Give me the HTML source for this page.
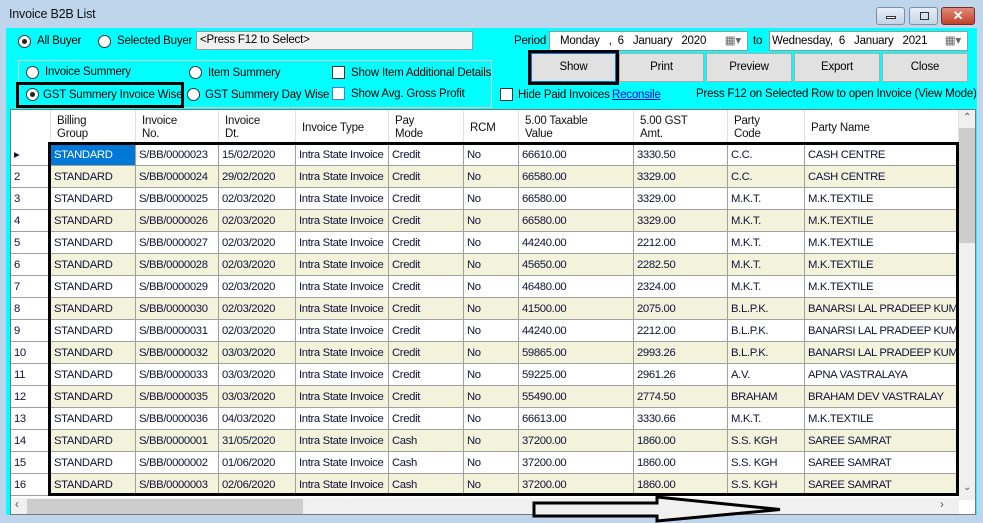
<!DOCTYPE html>
<html><head><meta charset="utf-8"><style>
*{box-sizing:border-box;margin:0;padding:0}
body{width:983px;height:523px;overflow:hidden;background:#bfd5ec;font-family:"Liberation Sans",sans-serif;font-size:11.5px;letter-spacing:-0.2px;color:#000;position:relative}
.a{position:absolute;white-space:nowrap}
.cyan{position:absolute;left:6px;top:28px;width:971px;height:487px;background:#00ffff}
.rad{position:absolute;width:13px;height:13px;border:1px solid #333;border-radius:50%;background:#fff}
.rad.on::after{content:"";position:absolute;left:3px;top:3px;width:5px;height:5px;border-radius:50%;background:#222}
.chk{position:absolute;width:13px;height:13px;border:1px solid #333;background:#fff}
.btn{position:absolute;top:53px;height:29px;background:#e1e1e1;border:1px solid #adadad;text-align:center;line-height:27px}
.grid{position:absolute;left:10px;top:109px;width:966px;height:406px;background:#fff;border:1px solid #777;overflow:hidden}
.h{position:absolute;top:0;height:34px;border-right:1px solid #e0e0e0;padding:5px 0 0 6px;line-height:13px;color:#111}
.r{position:absolute;left:0;height:22px;border-bottom:1px solid #a0a0a0}
.c{position:absolute;top:0;height:21px;border-right:1px solid #a0a0a0;padding-left:3px;line-height:23px;color:#10103a;overflow:hidden;white-space:nowrap;font-size:11.3px;letter-spacing:-0.35px}
</style></head><body>
<div class="a" style="left:9px;top:7px;font-size:12.5px;color:#111">Invoice B2B List</div>
<div class="a" style="left:876px;top:7px;width:29px;height:18px;border:1px solid #7b8ea6;border-radius:3px;background:linear-gradient(#e6eef8,#c5d4e6)"><div style="position:absolute;left:9px;top:8px;width:10px;height:3px;border:1px solid #333;background:#fff"></div></div>
<div class="a" style="left:909px;top:7px;width:29px;height:18px;border:1px solid #7b8ea6;border-radius:3px;background:linear-gradient(#e6eef8,#c5d4e6)"><div style="position:absolute;left:10px;top:4px;width:9px;height:8px;border:1px solid #333"></div></div>
<div class="a" style="left:941px;top:7px;width:34px;height:18px;border:1px solid #7a2a20;border-radius:3px;background:linear-gradient(#e08a78,#c2402a);color:#fff;font-weight:bold;text-align:center;line-height:16px;font-size:13px">✕</div>
<div class="cyan"></div>
<div class="rad on" style="left:18px;top:35px"></div><div class="a" style="left:37px;top:35px">All Buyer</div>
<div class="rad" style="left:98px;top:35px"></div><div class="a" style="left:117px;top:35px">Selected Buyer</div>
<div class="a" style="left:196px;top:31px;width:277px;height:19px;background:#f0f0f0;border:1px solid #999;padding-left:3px;line-height:17px">&lt;Press F12 to Select&gt;</div>
<div class="a" style="left:18px;top:60px;width:474px;height:48px;border:1px solid #ccc"></div>
<div class="rad" style="left:26px;top:66px"></div><div class="a" style="left:45px;top:66px">Invoice Summery</div>
<div class="rad" style="left:189px;top:66px"></div><div class="a" style="left:208px;top:67px">Item Summery</div>
<div class="chk" style="left:332px;top:66px"></div><div class="a" style="left:351px;top:67px">Show Item Additional Details</div>
<div class="a" style="left:16px;top:82px;width:168px;height:26px;border:3px solid #000"></div>
<div class="rad on" style="left:26px;top:88px"></div><div class="a" style="left:43px;top:89px">GST Summery Invoice Wise</div>
<div class="rad" style="left:187px;top:88px"></div><div class="a" style="left:205px;top:89px">GST Summery Day Wise</div>
<div class="chk" style="left:332px;top:87px;border-color:#4a7cd0"></div><div class="a" style="left:351px;top:88px">Show Avg. Gross Profit</div>
<div class="a" style="left:514px;top:35px">Period</div>
<div class="a" style="left:549px;top:31px;width:199px;height:20px;background:#fff;border:1px solid #999;padding-left:10px;line-height:19px">Monday &nbsp;&nbsp;, &nbsp;6 &nbsp;&nbsp;January &nbsp;&nbsp;2020<span style="position:absolute;right:6px;color:#666">▦▾</span></div>
<div class="a" style="left:753px;top:35px">to</div>
<div class="a" style="left:769px;top:31px;width:199px;height:20px;background:#fff;border:1px solid #999;padding-left:2px;line-height:19px">Wednesday, &nbsp;6 &nbsp;&nbsp;January &nbsp;&nbsp;2021<span style="position:absolute;right:6px;color:#666">▦▾</span></div>
<div class="btn" style="left:531px;width:85px;border:1px solid #0078d7">Show</div>
<div class="a" style="left:528px;top:50px;width:91px;height:35px;border:3px solid #000"></div>
<div class="btn" style="left:619px;width:85px">Print</div>
<div class="btn" style="left:706px;width:86px">Preview</div>
<div class="btn" style="left:794px;width:86px">Export</div>
<div class="btn" style="left:882px;width:86px">Close</div>
<div class="chk" style="left:500px;top:88px"></div><div class="a" style="left:518px;top:89px">Hide Paid Invoices</div>
<div class="a" style="left:612px;top:89px;color:#00e;text-decoration:underline">Reconsile</div>
<div class="a" style="left:696px;top:88px">Press F12 on Selected Row to open Invoice (View Mode)</div>
<div class="grid" id="g">
<div class="h" style="left:0;width:40px"></div>
<div class="h" style="left:40px;width:85px">Billing<br>Group</div>
<div class="h" style="left:125px;width:83px">Invoice<br>No.</div>
<div class="h" style="left:208px;width:77px">Invoice<br>Dt.</div>
<div class="h" style="left:285px;width:93px;padding-top:12px">Invoice Type</div>
<div class="h" style="left:378px;width:75px">Pay<br>Mode</div>
<div class="h" style="left:453px;width:55px;padding-top:12px">RCM</div>
<div class="h" style="left:508px;width:115px">5.00 Taxable<br>Value</div>
<div class="h" style="left:623px;width:94px">5.00 GST<br>Amt.</div>
<div class="h" style="left:717px;width:77px">Party<br>Code</div>
<div class="h" style="left:794px;width:154px;padding-top:12px">Party Name</div>
<div class="a" style="left:948px;top:0;width:17px;height:390px;background:#f0f0f0"><div style="position:absolute;left:0;top:18px;width:17px;height:115px;background:#cdcdcd"></div><div style="position:absolute;left:4px;top:2px;color:#555;font-size:10px">⌃</div><div style="position:absolute;left:4px;top:372px;color:#555;font-size:10px">⌄</div></div>
<div class="a" style="left:0;top:388px;width:948px;height:18px;background:#f0f0f0"><div style="position:absolute;left:16px;top:1px;width:276px;height:15px;background:#cdcdcd"></div><div style="position:absolute;left:4px;top:1px;color:#555">‹</div><div style="position:absolute;left:929px;top:1px;color:#555">›</div></div>
</div>
<div class="a" style="left:48px;top:142px;width:911px;height:354px;border:3px solid #000"></div>
<svg class="a" style="left:0;top:0" width="983" height="523"><polygon points="534,503 657,503 657,497 780,509.5 657,521 657,516 534,516" fill="#f0f0f0" stroke="#000" stroke-width="3"/></svg>
<script>
var d=[["S/BB/0000023","15/02/2020","Credit","66610.00","3330.50","C.C.","CASH CENTRE"],["S/BB/0000024","29/02/2020","Credit","66580.00","3329.00","C.C.","CASH CENTRE"],["S/BB/0000025","02/03/2020","Credit","66580.00","3329.00","M.K.T.","M.K.TEXTILE"],["S/BB/0000026","02/03/2020","Credit","66580.00","3329.00","M.K.T.","M.K.TEXTILE"],["S/BB/0000027","02/03/2020","Credit","44240.00","2212.00","M.K.T.","M.K.TEXTILE"],["S/BB/0000028","02/03/2020","Credit","45650.00","2282.50","M.K.T.","M.K.TEXTILE"],["S/BB/0000029","02/03/2020","Credit","46480.00","2324.00","M.K.T.","M.K.TEXTILE"],["S/BB/0000030","02/03/2020","Credit","41500.00","2075.00","B.L.P.K.","BANARSI LAL PRADEEP KUM"],["S/BB/0000031","02/03/2020","Credit","44240.00","2212.00","B.L.P.K.","BANARSI LAL PRADEEP KUM"],["S/BB/0000032","03/03/2020","Credit","59865.00","2993.26","B.L.P.K.","BANARSI LAL PRADEEP KUM"],["S/BB/0000033","03/03/2020","Credit","59225.00","2961.26","A.V.","APNA VASTRALAYA"],["S/BB/0000035","03/03/2020","Credit","55490.00","2774.50","BRAHAM","BRAHAM DEV VASTRALAY"],["S/BB/0000036","04/03/2020","Credit","66613.00","3330.66","M.K.T.","M.K.TEXTILE"],["S/BB/0000001","31/05/2020","Cash","37200.00","1860.00","S.S. KGH","SAREE SAMRAT"],["S/BB/0000002","01/06/2020","Cash","37200.00","1860.00","S.S. KGH","SAREE SAMRAT"],["S/BB/0000003","02/06/2020","Cash","37200.00","1860.00","S.S. KGH","SAREE SAMRAT"]];
var L=[0,40,125,208,285,378,453,508,623,717,794,948],h="";
d.forEach(function(r,i){var v=[i==0?"▸":String(i+1),"STANDARD",r[0],r[1],"Intra State Invoice",r[2],"No",r[3],r[4],r[5],r[6]];var bg=i%2?"#f3f3dc":"#fff";
h+='<div class="r" style="top:'+(34+22*i)+'px;width:948px">';
for(var k=0;k<11;k++){var b=k==0?"#fff":bg,col="";if(i==0&&k==1){b="#0078d7";col=";color:#fff"}
h+='<div class="c" style="left:'+L[k]+'px;width:'+(L[k+1]-L[k])+'px;background:'+b+col+'">'+v[k]+'</div>'}
h+='</div>'});
document.getElementById("g").insertAdjacentHTML("afterbegin",h);
</script>
</body></html>
